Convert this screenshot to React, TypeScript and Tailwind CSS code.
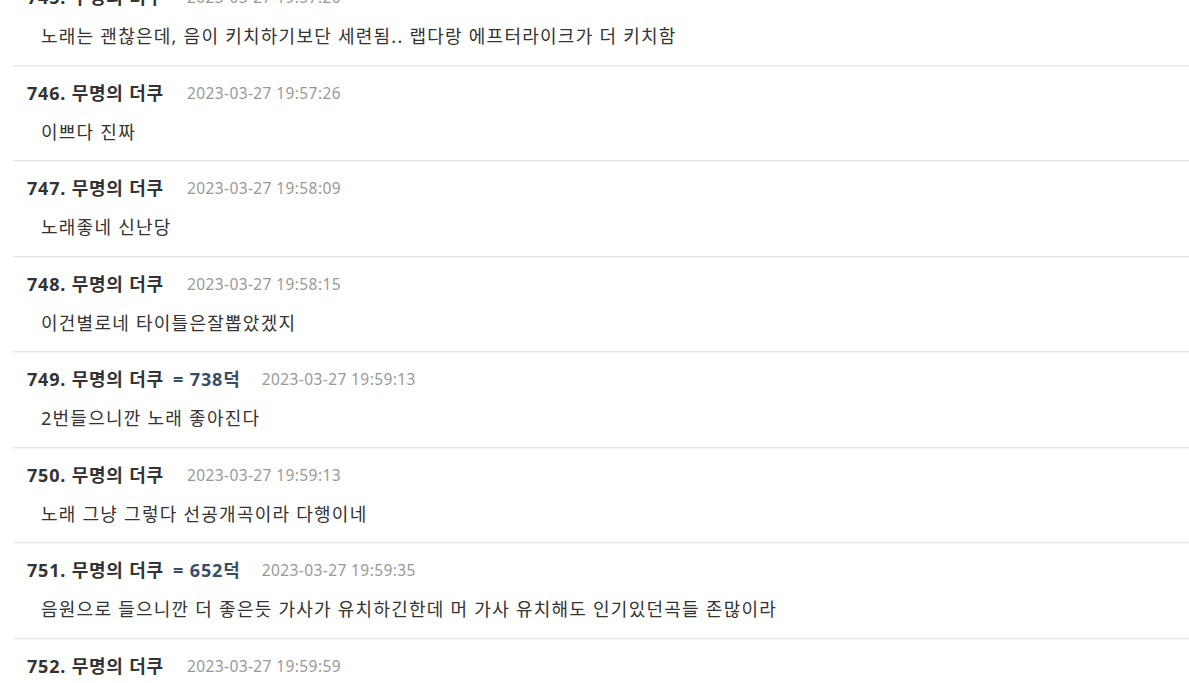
import React from "react";

type Item = { n: number; tag?: string; date: string; text: string };

const items: Item[] = [
  { n: 745, date: "2023-03-27 19:57:26", text: "노래는 괜찮은데, 음이 키치하기보단 세련됨.. 랩다랑 에프터라이크가 더 키치함" },
  { n: 746, date: "2023-03-27 19:57:26", text: "이쁘다 진짜" },
  { n: 747, date: "2023-03-27 19:58:09", text: "노래좋네 신난당" },
  { n: 748, date: "2023-03-27 19:58:15", text: "이건별로네 타이틀은잘뽑았겠지" },
  { n: 749, tag: "738덕", date: "2023-03-27 19:59:13", text: "2번들으니깐 노래 좋아진다" },
  { n: 750, date: "2023-03-27 19:59:13", text: "노래 그냥 그렇다 선공개곡이라 다행이네" },
  { n: 751, tag: "652덕", date: "2023-03-27 19:59:35", text: "음원으로 들으니깐 더 좋은듯 가사가 유치하긴한데 머 가사 유치해도 인기있던곡들 존많이라" },
  { n: 752, date: "2023-03-27 19:59:59", text: "" },
];

const font = "font-['Noto_Sans','Noto_Sans_CJK_KR',sans-serif]";

export default function App() {
  return (
    <div className={`w-[1189px] h-[683px] overflow-hidden bg-white ${font}`}>
      <div className="-mt-[29px] ml-[13px]">
        {items.map((it, i) => (
          <div key={it.n}>
            {i > 0 && (
              <div>
                <div className="h-px bg-[#e6e6e6]" />
                <div className="h-px bg-[#f6f6f6]" />
              </div>
            )}
            <div className="pt-[14px] pb-[16.5px] pl-[14px]">
              <div className="flex items-center h-[24px] leading-[24px]">
                <span className="text-[18px] font-bold text-[#333333] tracking-[0.8px]">
                  {it.n}. 무명의 더쿠
                </span>
                {it.tag && (
                  <span className="ml-[9px] text-[18px] font-bold text-[#3a4d66] tracking-[0.9px]">
                    = {it.tag}
                  </span>
                )}
                <span
                  className={`${it.tag ? "ml-[21px]" : "ml-[23px]"} text-[15.5px] text-[#999999] tracking-[0.4px] font-['Noto_Sans',sans-serif]`}
                >
                  {it.date}
                </span>
              </div>
              <div className="mt-[15px] h-[24px] leading-[24px] pl-[14px] text-[18px] text-[#333333] tracking-[1.25px]">
                {it.text}
              </div>
            </div>
          </div>
        ))}
      </div>
    </div>
  );
}
